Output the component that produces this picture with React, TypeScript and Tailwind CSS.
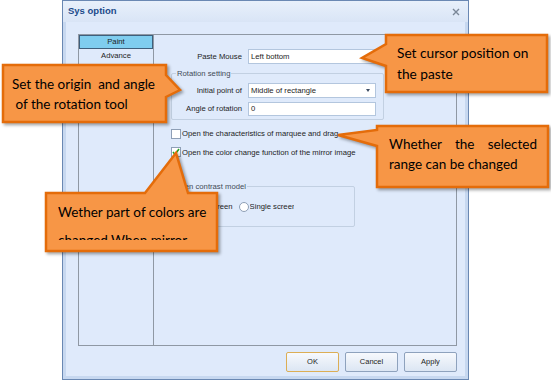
import React from "react";

const ui = { fontFamily: '"Liberation Sans", Arial, sans-serif' };
const callFont = { fontFamily: 'Lato, "Liberation Sans", sans-serif' };

function Check({ checked }: { checked?: boolean }) {
  return (
    <span className="w-[10px] h-[10px] border border-[#8e9fb6] bg-white flex items-center justify-center shrink-0">
      {checked && (
        <svg width="8" height="8" viewBox="0 0 8 8">
          <path d="M1 4 L3 6.5 L7 1" stroke="#21a121" strokeWidth="1.6" fill="none" />
        </svg>
      )}
    </span>
  );
}

function Radio() {
  return <span className="w-[10px] h-[10px] rounded-full border border-[#8e9fb6] bg-white shrink-0" />;
}

function Btn({ label, primary }: { label: string; primary?: boolean }) {
  return (
    <button
      className={
        "w-[53px] h-[20px] rounded-[2px] border text-[7.5px] text-[#1d1d1d] bg-gradient-to-b from-[#f7f9fd] to-[#dce6f3] " +
        (primary ? "border-[#dcae55]" : "border-[#8ea2bd]")
      }
    >
      {label}
    </button>
  );
}

export default function App() {
  return (
    <div className="relative w-[551px] h-[381px] bg-white overflow-hidden" style={ui}>
      {/* dialog */}
      <div className="ml-[62px] w-[407px] h-[380px] border border-[#6a88b3] flex flex-col bg-[#dfeafb]">
        <div className="h-[21px] flex items-center justify-between pl-[5px] pr-[8px] bg-gradient-to-b from-[#e8f0fb] to-[#d9e5f6]">
          <span className="text-[9.5px] font-bold text-[#1b4a8a]">Sys option</span>
          <svg width="8" height="8" viewBox="0 0 8 8">
            <path d="M1 1 L7 7 M7 1 L1 7" stroke="#7a8797" strokeWidth="1.4" />
          </svg>
        </div>
        <div className="flex-1 flex flex-col border-[3px] border-t-0 border-[#c7d8f0] pt-[12px] pl-[12px] pr-[8px]">
          <div className="flex h-[312px]">
            <div className="w-[76px] h-full border border-[#8f98a4] text-[7.7px] text-[#1d1d1d]">
              <div className="h-[14px] border border-[#3e5f7c] bg-[#7fcdef] flex items-center justify-center">
                Paint
              </div>
              <div className="h-[14px] flex items-center justify-center">Advance</div>
            </div>
            <div className="flex-1 h-full border border-l-0 border-[#8f98a4] text-[7.7px] text-[#1d1d1d]">
              <div className="mt-[14px] flex items-center">
                <span className="w-[88px] text-right">Paste Mouse</span>
                <span className="ml-[6px] w-[128px] h-[15px] bg-white border border-[#b3c6de] flex items-center pl-[2px]">
                  Left bottom
                </span>
              </div>

              <div className="relative mt-[9px] ml-[17px] w-[213px] h-[47px] border border-[#c2d0e2] rounded-[2px] pt-[9px]">
                <span className="absolute -top-[6px] left-[4px] px-[1px] bg-[#dfeafb] text-[#3f4a57]">
                  Rotation setting
                </span>
                <div className="flex items-center">
                  <span className="w-[70px] text-right">Initial point of</span>
                  <span className="ml-[6px] w-[128px] h-[15px] bg-white border border-[#b3c6de] flex items-center justify-between pl-[2px] pr-[5px]">
                    Middle of rectangle
                    <svg width="4" height="3" viewBox="0 0 4 3">
                      <path d="M0 0 H4 L2 3 Z" fill="#3d4d63" />
                    </svg>
                  </span>
                </div>
                <div className="mt-[4px] flex items-center">
                  <span className="w-[70px] text-right">Angle of rotation</span>
                  <span className="ml-[6px] w-[128px] h-[14px] bg-white border border-[#b3c6de] flex items-center pl-[2px]">
                    0
                  </span>
                </div>
              </div>

              <div className="mt-[8px] ml-[17px] flex items-center gap-[1px]">
                <Check />
                <span>Open the characteristics of marquee and drag</span>
              </div>
              <div className="mt-[7px] ml-[17px] flex items-center gap-[1px]">
                <Check checked />
                <span>Open the color change function of the mirror image</span>
              </div>

              <div className="relative mt-[28px] ml-[11px] w-[190px] h-[41px] border border-[#c2d0e2] rounded-[2px] flex items-center pl-[18px] pt-[1px]">
                <span className="absolute -top-[6px] left-[2px] px-[1px] bg-[#dfeafb] text-[#3f4a57]">
                  Screen contrast model
                </span>
                <div className="flex items-center gap-[1px]">
                  <Radio />
                  <span>Full screen</span>
                </div>
                <div className="ml-[6px] flex items-center gap-[1px]">
                  <Radio />
                  <span className="w-[44px] overflow-hidden whitespace-nowrap">Single screen</span>
                </div>
              </div>
            </div>
          </div>
          <div className="mt-[6px] flex justify-end gap-[6px]">
            <Btn label="OK" primary />
            <Btn label="Cancel" />
            <Btn label="Apply" />
          </div>
        </div>
      </div>

      {/* callouts */}
      <svg
        className="absolute inset-0 pointer-events-none"
        width="551"
        height="381"
        style={{ filter: "drop-shadow(2px 2px 1.5px rgba(0,0,0,0.35))" }}
      >
        <g fill="#f79646" stroke="#e46c0a" strokeWidth="2.5" strokeLinejoin="miter">
          <path d="M386 35 H547 V92 H386 V66 L362 58 L386 44 Z" />
          <path d="M3 65 H166 V75 L180 90 L166 97 V122 H3 Z" />
          <path d="M377 126 H548 V187 H377 V146 L338 135 L377 130 Z" />
          <path d="M46 193 H145 L176 153 L188 193 H217 V251 H46 Z" />
        </g>
      </svg>
      <div className="absolute left-[397px] top-[42px] w-[148px] text-[13.7px] leading-[21px] text-black" style={callFont}>
        Set cursor position on the paste
      </div>
      <div className="absolute left-[12px] top-[74px] w-[152px] text-[13.5px] leading-[20px] text-black whitespace-pre" style={callFont}>
        {"Set the origin  and angle\n of the rotation tool"}
      </div>
      <div className="absolute left-[389px] top-[134px] w-[148px] text-[13.5px] leading-[20px] text-black text-justify" style={callFont}>
        Whether the selected range can be changed
      </div>
      <div className="absolute left-[58px] top-[198px] w-[155px] h-[42px] overflow-hidden text-[13.5px] leading-[28px] text-black" style={callFont}>
        Wether part of colors are changed When mirror
      </div>
    </div>
  );
}
